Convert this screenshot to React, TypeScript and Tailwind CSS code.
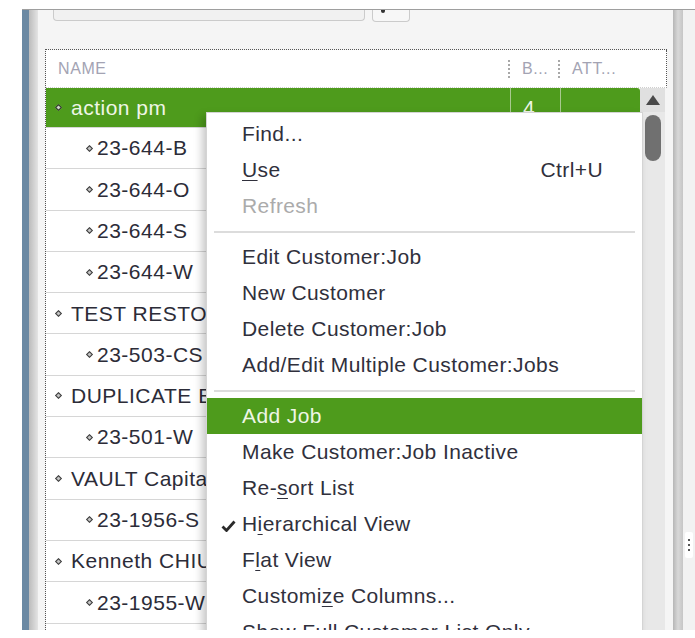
import React from 'react';

type Row = { name: string; child?: boolean; selected?: boolean; b?: string };

const rows: Row[] = [
  { name: 'action pm', selected: true, b: '4' },
  { name: '23-644-B', child: true },
  { name: '23-644-O', child: true },
  { name: '23-644-S', child: true },
  { name: '23-644-W', child: true },
  { name: 'TEST RESTORATION' },
  { name: '23-503-CS', child: true },
  { name: 'DUPLICATE ENTRY' },
  { name: '23-501-W', child: true },
  { name: 'VAULT Capital Group' },
  { name: '23-1956-S', child: true },
  { name: 'Kenneth CHIU' },
  { name: '23-1955-W', child: true },
];

type MenuItem =
  | 'sep'
  | {
      label: React.ReactNode;
      shortcut?: string;
      disabled?: boolean;
      active?: boolean;
      checked?: boolean;
    };

// underlined mnemonic letter
const U = ({ children }: { children: React.ReactNode }) => (
  <span className="underline decoration-1 underline-offset-[3px]">{children}</span>
);

const menu: MenuItem[] = [
  { label: 'Find...' },
  { label: <><U>U</U>se</>, shortcut: 'Ctrl+U' },
  { label: 'Refresh', disabled: true },
  'sep',
  { label: 'Edit Customer:Job' },
  { label: 'New Customer' },
  { label: 'Delete Customer:Job' },
  { label: 'Add/Edit Multiple Customer:Jobs' },
  'sep',
  { label: 'Add Job', active: true },
  { label: 'Make Customer:Job Inactive' },
  { label: <>Re-<U>s</U>ort List</> },
  { label: <>H<U>i</U>erarchical View</>, checked: true },
  { label: <>F<U>l</U>at View</> },
  { label: <>Customi<U>z</U>e Columns...</> },
  { label: <>Show Full Customer List <U>O</U>nly</> },
];

function Diamond({ selected }: { selected?: boolean }) {
  return (
    <span
      className={
        'inline-block h-[5px] w-[5px] shrink-0 rotate-45 border ' +
        (selected ? 'border-[#26301f] bg-[#cfd6c8]' : 'border-[#3c3c3c] bg-[#c4c4c4]')
      }
    />
  );
}

function ContextMenu() {
  return (
    <div className="absolute left-[184px] top-[102px] w-[437px] h-[540px] border border-[#d4d4d4] bg-white pt-[3px] shadow-[-4px_4px_8px_rgba(0,0,0,0.22)]">
      {menu.map((item, i) =>
        item === 'sep' ? (
          <div key={i} className="flex h-[15px] items-center px-[7px]">
            <div className="h-[2px] w-full bg-[#dcdcdc]" />
          </div>
        ) : (
          <div
            key={i}
            className={
              'relative flex h-[36px] items-center pl-[35px] text-[21px] tracking-[0.4px] ' +
              (item.active
                ? 'bg-[#4e9b1c] text-[#eef6e6]'
                : item.disabled
                  ? 'text-[#ababab]'
                  : 'text-[#30303c]')
            }
          >
            {item.checked && (
              <svg className="absolute left-[14px] top-[14px]" width="15" height="12" viewBox="0 0 15 12">
                <path d="M1.5 6.5 L5.5 10.5 L13.5 1.5" fill="none" stroke="#2a2a2a" strokeWidth="2.8" />
              </svg>
            )}
            <span className="whitespace-nowrap">{item.label}</span>
            {item.shortcut && <span className="ml-auto pr-[39px]">{item.shortcut}</span>}
          </div>
        ),
      )}
    </div>
  );
}

export default function App() {
  return (
    <div className="h-[638px] w-[695px] overflow-hidden bg-white font-['Liberation_Sans',Arial,sans-serif]">
      <div className="h-[9px]" />
      <div className="relative ml-[22px] flex h-[621px] overflow-hidden border-t border-[#9e9e9e]">
        {/* left window edge */}
        <div className="w-[7px] bg-[#6b89a3]" />
        <div className="w-[9px] bg-gradient-to-r from-[#bcbcbc] to-[#e4e4e4]" />

        {/* centre panel */}
        <div className="flex w-[635px] flex-col bg-[#f5f5f5]">
          <div className="flex h-[11px] gap-[7px] pl-[15px]">
            <div className="h-[11px] w-[312px] rounded-b-[4px] border border-t-0 border-[#cbcbcb] bg-[#f1f1f1]" />
            <div className="relative h-[12px] w-[38px] rounded-b-[4px] border border-t-0 border-[#cbcbcb] bg-[#f7f7f7]">
              <span className="absolute left-[8px] top-0 h-[3px] w-[4px] rounded-b-full bg-[#333]" />
            </div>
          </div>

          <div className="ml-[7px] mt-[28px] flex w-[622px] flex-1 flex-col border-l border-t border-dotted border-[#555]">
            {/* column header */}
            <div className="flex h-[38px] items-center border-b border-r border-b-[#cfcfcf] border-r-[#555] border-dotted bg-white text-[16px] tracking-[0.6px] text-[#a3a3b3]">
              <div className="w-[462px] pl-[12px]">NAME</div>
              <div className="h-[18px] border-l-2 border-dotted border-[#a8a8a8]" />
              <div className="w-[48px] pl-[12px]">B...</div>
              <div className="h-[18px] border-l-2 border-dotted border-[#a8a8a8]" />
              <div className="pl-[12px]">ATT...</div>
            </div>

            {/* rows + scrollbar */}
            <div className="flex flex-1 bg-white">
              <div className="w-[594px]">
                {rows.map((r, i) => (
                  <div
                    key={i}
                    className={
                      'flex items-stretch border-b border-[#d6d6d6] text-[21px] tracking-[0.5px] ' +
                      (r.selected
                        ? 'h-[40px] rounded-tr-[3px] bg-[#4e9b1c] text-[#eef6e6]'
                        : 'h-[41.3px] text-[#2c2c38]')
                    }
                  >
                    <div
                      className={
                        'flex w-[464px] items-center ' + (r.child ? 'gap-[5px] pl-[41px]' : 'gap-[10px] pl-[10px]')
                      }
                    >
                      <Diamond selected={r.selected} />
                      <span className="whitespace-nowrap">{r.name}</span>
                    </div>
                    <div
                      className={
                        'flex w-[50px] items-center pl-[12px] border-l ' +
                        (r.selected ? 'border-[#a9c98f]' : 'border-[#d6d6d6]')
                      }
                    >
                      {r.b}
                    </div>
                    <div className={'flex-1 border-l ' + (r.selected ? 'border-[#a9c98f]' : 'border-[#d6d6d6]')} />
                  </div>
                ))}
              </div>
              <div className="flex w-[25px] flex-col bg-[#e8e8e8]">
                <div className="flex h-[24px] items-center justify-center bg-[#e0e0e0] pl-[1px]">
                  <span className="h-0 w-0 border-b-[10px] border-l-[7px] border-r-[7px] border-b-[#4a4a4a] border-l-transparent border-r-transparent" />
                </div>
                <div className="ml-[5px] mt-[3px] h-[46px] w-[16px] rounded-full bg-[#707070]" />
              </div>
              <div className="w-[2px] bg-[#f5f5f5]" />
            </div>
          </div>
        </div>

        {/* right window edge */}
        <div className="w-[10px] bg-gradient-to-r from-[#b6b6b6] via-[#d8d8d8] to-[#c6c6c6]" />
        <div className="flex w-[12px] flex-col bg-[#f2f2f2]">
          <div className="ml-[2px] mt-[522px] flex h-[26px] w-[8px] flex-col items-center justify-center gap-[3px] rounded-[2px] bg-white">
            <span className="h-[2px] w-[2px] bg-[#555]" />
            <span className="h-[2px] w-[2px] bg-[#555]" />
            <span className="h-[2px] w-[2px] bg-[#555]" />
          </div>
        </div>

        <ContextMenu />
      </div>
    </div>
  );
}
